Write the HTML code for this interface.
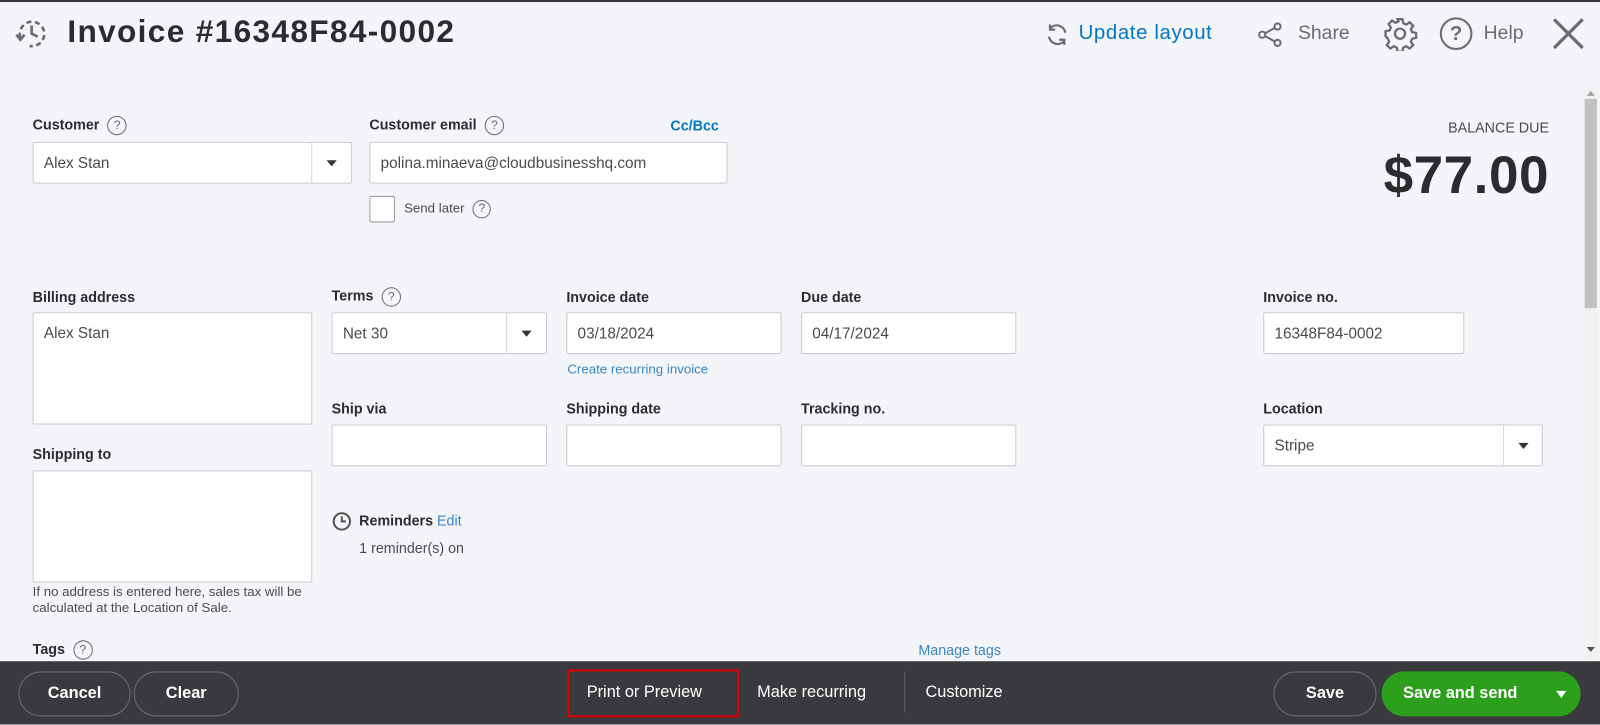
<!DOCTYPE html>
<html><head><meta charset="utf-8"><style>
*{margin:0;padding:0;box-sizing:border-box}
html,body{width:1600px;height:724px;overflow:hidden;background:#f4f5f8}
#w{position:absolute;left:0;top:0;width:1568px;height:710px;transform:scale(1.020408);transform-origin:0 0;font-family:"Liberation Sans",sans-serif;color:#393a3d}
.a{position:absolute;white-space:nowrap}
.lbl{font-size:14px;font-weight:bold;color:#2b2c2e;transform:translateY(-50%)}
.box{position:absolute;background:#fff;border:1px solid #c9cbce;border-radius:2px}
.val{position:absolute;left:10px;top:50%;transform:translateY(-50%);font-size:15px;color:#4a4b4f}
.dd{position:absolute;top:0;bottom:0;right:0;border-left:1px solid #d4d6d9}
.dd:after{content:"";position:absolute;left:50%;top:50%;margin:-3px 0 0 -5px;border-left:5px solid transparent;border-right:5px solid transparent;border-top:6px solid #333}
.q{display:inline-block;width:19px;height:19px;border:1.5px solid #6b6c72;border-radius:50%;font-size:12px;text-align:center;line-height:16px;color:#6b6c72;font-weight:normal;vertical-align:middle;margin-left:8px}
.link{color:#0077c5}
.btn{position:absolute;top:658px;height:44px;border:1px solid #6b6c72;border-radius:22px;color:#fff;font-weight:bold;font-size:16px;text-align:center;line-height:42px}
.ft{position:absolute;top:670px;color:#fff;font-size:16px}
</style></head><body><div id="w">
<div class="a" style="left:0;top:0;width:1568px;height:2px;background:#3a3a3a"></div>

<svg class="a" style="left:15px;top:17px" width="34" height="32" viewBox="0 0 34 32" fill="none" stroke="#6b6c72" stroke-width="2.6">
<path d="M5 20 A12 12 0 1 1 14 28" stroke-dasharray="5 3.5"/><path d="M1 17 L5 22 L9 17"/><path d="M16 8 V16 L22 19"/></svg>
<div class="a" style="left:66px;top:13px;font-size:31px;letter-spacing:1.3px;font-weight:bold;color:#2b2c2e">Invoice #16348F84-0002</div>

<svg class="a" style="left:1024px;top:22px" width="24" height="24" viewBox="0 0 24 24" fill="none" stroke="#6b6c72" stroke-width="2.2"><path d="M20 10A8.5 8.5 0 0 0 5 6M4 14a8.5 8.5 0 0 0 15 4"/><path d="M5 2v5h5M19 22v-5h-5"/></svg>
<div class="a link" style="left:1057px;top:21px;font-size:20px;letter-spacing:0.6px">Update layout</div>
<svg class="a" style="left:1232px;top:22px" width="26" height="24" viewBox="0 0 26 24" fill="none" stroke="#6b6c72" stroke-width="2"><circle cx="5" cy="12" r="3"/><circle cx="20" cy="4" r="3"/><circle cx="20" cy="20" r="3"/><path d="M8 10.5L17 5.5M8 13.5L17 18.5"/></svg>
<div class="a" style="left:1272px;top:22px;font-size:19px;color:#6b6c72">Share</div>
<svg class="a" style="left:1355px;top:16px" width="34" height="34" viewBox="0 0 24 24" fill="none" stroke="#6b6c72" stroke-width="1.6"><circle cx="12" cy="12" r="3.5"/><path d="M10.3 2h3.4l.6 2.8 2 .9 2.4-1.6 2.4 2.4-1.6 2.4.9 2 2.8.6v3.4l-2.8.6-.9 2 1.6 2.4-2.4 2.4-2.4-1.6-2 .9-.6 2.8h-3.4l-.6-2.8-2-.9-2.4 1.6-2.4-2.4 1.6-2.4-.9-2L2 13.7v-3.4l2.8-.6.9-2-1.6-2.4 2.4-2.4 2.4 1.6 2-.9z"/></svg>
<div class="a" style="left:1411px;top:17px;width:32px;height:32px;border:2.3px solid #6b6c72;border-radius:50%;text-align:center;line-height:28px;font-size:20px;font-weight:bold;color:#6b6c72">?</div>
<div class="a" style="left:1454px;top:22px;font-size:19px;color:#6b6c72">Help</div>
<svg class="a" style="left:1520px;top:16px" width="34" height="34" viewBox="0 0 34 34" stroke="#6b6c72" stroke-width="3.2"><path d="M3 3L31 31M31 3L3 31"/></svg>

<div class="a" style="left:1552px;top:86px;width:14px;height:560px;background:#f1f1f1"></div>
<div class="a" style="left:1553px;top:97px;width:12px;height:205px;background:#c1c1c1"></div>
<div class="a" style="left:1555px;top:89px;border-left:4px solid transparent;border-right:4px solid transparent;border-bottom:5px solid #a3a3a3"></div>
<div class="a" style="left:1555px;top:634px;border-left:4px solid transparent;border-right:4px solid transparent;border-top:5px solid #505050"></div>

<div class="a lbl" style="left:32px;top:123px">Customer<span class="q">?</span></div>
<div class="box" style="left:32px;top:139px;width:313px;height:41px"><div class="val">Alex Stan</div><div class="dd" style="width:39px"></div></div>
<div class="a lbl" style="left:362px;top:123px">Customer email<span class="q">?</span></div>
<div class="a link" style="left:657px;top:115px;font-size:14px;font-weight:bold">Cc/Bcc</div>
<div class="box" style="left:362px;top:139px;width:351px;height:41px"><div class="val">polina.minaeva@cloudbusinesshq.com</div></div>
<div class="box" style="left:362px;top:192px;width:25px;height:26px;border-color:#9a9ba0"></div>
<div class="a" style="left:396px;top:196px;font-size:13px;color:#4a4b4f">Send later<span class="q" style="width:18px;height:18px;line-height:15px">?</span></div>

<div class="a" style="right:50px;top:117px;font-size:14px;color:#4a4b4f">BALANCE DUE</div>
<div class="a" style="right:50px;top:142px;font-size:52px;letter-spacing:0.5px;font-weight:bold;color:#2b2c2e">$77.00</div>

<div class="a lbl" style="left:32px;top:291px">Billing address</div>
<div class="box" style="left:32px;top:306px;width:274px;height:110px"><div style="position:absolute;left:10px;top:11px;font-size:15px;color:#4a4b4f">Alex Stan</div></div>
<div class="a lbl" style="left:325px;top:291px">Terms<span class="q">?</span></div>
<div class="box" style="left:325px;top:306px;width:211px;height:41px"><div class="val">Net 30</div><div class="dd" style="width:39px"></div></div>
<div class="a lbl" style="left:555px;top:291px">Invoice date</div>
<div class="box" style="left:555px;top:306px;width:211px;height:41px"><div class="val">03/18/2024</div></div>
<div class="a link" style="left:556px;top:354px;font-size:13px;color:#3a86c8">Create recurring invoice</div>
<div class="a lbl" style="left:785px;top:291px">Due date</div>
<div class="box" style="left:785px;top:306px;width:211px;height:41px"><div class="val">04/17/2024</div></div>
<div class="a lbl" style="left:1238px;top:291px">Invoice no.</div>
<div class="box" style="left:1238px;top:306px;width:197px;height:41px"><div class="val">16348F84-0002</div></div>

<div class="a lbl" style="left:325px;top:400px">Ship via</div>
<div class="box" style="left:325px;top:416px;width:211px;height:41px"></div>
<div class="a lbl" style="left:555px;top:400px">Shipping date</div>
<div class="box" style="left:555px;top:416px;width:211px;height:41px"></div>
<div class="a lbl" style="left:785px;top:400px">Tracking no.</div>
<div class="box" style="left:785px;top:416px;width:211px;height:41px"></div>
<div class="a lbl" style="left:1238px;top:400px">Location</div>
<div class="box" style="left:1238px;top:416px;width:274px;height:41px"><div class="val">Stripe</div><div class="dd" style="width:38px"></div></div>

<div class="a lbl" style="left:32px;top:445px">Shipping to</div>
<div class="box" style="left:32px;top:461px;width:274px;height:110px"></div>
<div class="a" style="left:32px;top:572px;font-size:13px;line-height:16px;color:#4a4b4f">If no address is entered here, sales tax will be<br>calculated at the Location of Sale.</div>

<svg class="a" style="left:325px;top:501px" width="20" height="20" viewBox="0 0 20 20" fill="none" stroke="#555" stroke-width="2"><circle cx="10" cy="10" r="8"/><path d="M10 5v5h4"/></svg>
<div class="a" style="left:352px;top:502px;font-size:14px;font-weight:bold;color:#2b2c2e">Reminders <span style="font-weight:normal;color:#3a86c8">Edit</span></div>
<div class="a" style="left:352px;top:529px;font-size:14px;color:#4a4b4f">1 reminder(s) on</div>

<div class="a lbl" style="left:32px;top:637px">Tags<span class="q">?</span></div>
<div class="a link" style="left:900px;top:629px;font-size:14px;color:#3a86c8">Manage tags</div>

<div class="a" style="left:0;top:648px;width:1568px;height:62px;background:#393a3d"></div>
<div class="btn" style="left:18px;width:110px">Cancel</div>
<div class="btn" style="left:131px;width:103px">Clear</div>
<div class="a" style="left:556px;top:656px;width:168px;height:47px;border:2px solid #e00000"></div>
<div class="ft" style="left:575px">Print or Preview</div>
<div class="ft" style="left:742px">Make recurring</div>
<div class="a" style="left:886px;top:658px;width:1px;height:40px;background:#5c5d61"></div>
<div class="ft" style="left:907px">Customize</div>
<div class="btn" style="left:1248px;width:101px">Save</div>
<div class="btn" style="left:1354px;width:195px;background:#2ca01c;border-color:#2ca01c;text-align:left;padding-left:20px">Save and send</div>
<div class="a" style="left:1525px;top:677px;border-left:5px solid transparent;border-right:5px solid transparent;border-top:7px solid #fff"></div>
</div></body></html>
